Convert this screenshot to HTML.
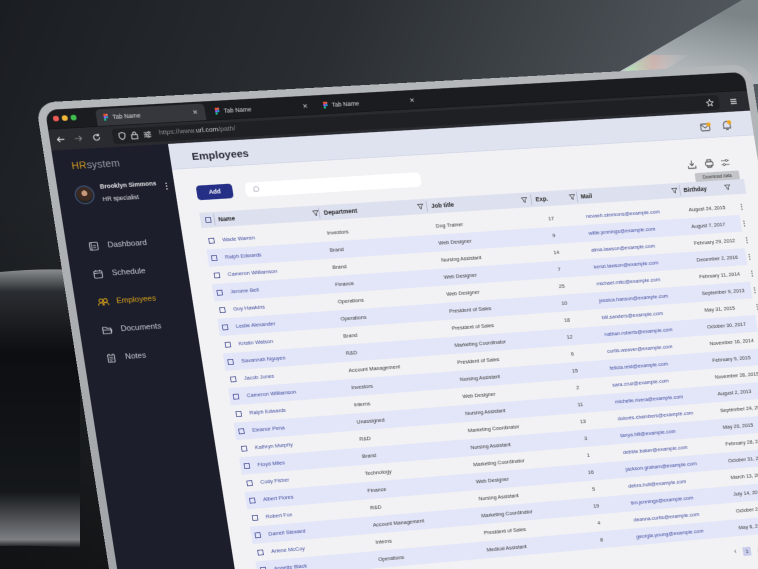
<!DOCTYPE html>
<html><head><meta charset="utf-8">
<style>
*{box-sizing:border-box;margin:0;padding:0}
html,body{width:758px;height:569px;overflow:hidden}
body{font-family:"Liberation Sans",sans-serif}
#clip{position:absolute;left:0;top:0;width:758px;height:569px;overflow:hidden;background:linear-gradient(112deg,#1a1d21 0%,#2a2e32 35%,#4a5055 68%,#656c71 100%)}
#bgdark{position:absolute;inset:0;background:linear-gradient(to bottom,rgba(0,0,0,0) 35%,rgba(0,0,0,.55) 100%)}
#wrap{position:absolute;left:0;top:0;width:1000px;height:760px;transform-origin:0 0;
transform:matrix3d(0.737352,-0.034289,0,0.000051548,0.110060,0.700293,0,0.000000487,0,0,1,0,45,110,0,1)}
#bezel{position:absolute;left:-11px;top:-11px;width:1022px;height:800px;border-radius:26px;background:linear-gradient(180deg,#b4b7ba,#9da0a4);}
#scr{position:absolute;left:0;top:0;width:1000px;height:780px;border-radius:16px 16px 0 0;overflow:hidden;background:#f2f2f3}
.abs{position:absolute}
#tabs{left:0;top:0;width:1000px;height:27px;background:#1b1c20}
#url{left:0;top:27px;width:1000px;height:31px;background:#2a2b30;border-top:1px solid #141418}
.tab{position:absolute;top:3px;height:24px;width:150px;border-radius:6px 6px 0 0;color:#dcdde0;font-size:8.5px;line-height:24px;padding-left:22px}
.tab .x{position:absolute;right:10px;top:0;font-size:9px;color:#ccc}
.fig{position:absolute;left:10px;top:7px;width:6px;height:10px}
#side{left:0;top:58px;width:160px;height:730px;background:#1c1e2b}
#main{left:160px;top:58px;width:840px;height:730px;background:#f2f2f4}
#hdr{left:0;top:0;width:840px;height:37px;background:#dfe2ef;border-bottom:1px solid #cfd3e6}
.nav{position:absolute;left:30px;font-size:11px;color:#c9ccd4;height:16px;line-height:16px}
.nav svg{position:absolute;left:0;top:1px}
.nav span{position:absolute;left:26px;white-space:nowrap}
.row{position:absolute;left:190px;width:770px;height:25px;font-size:7.5px;line-height:25px;color:#333}
.row.h{background:#e3e6f8}
.row span{position:absolute;white-space:nowrap}
.cb{position:absolute;left:5px;top:9px;width:8px;height:8px;border:1.3px solid #3b4590}
.nm{left:24px;color:#3e4a9e}
.dp{left:171px}.jb{left:326px}.ex{left:478px;width:30px;text-align:center}.ml{left:544px;color:#3e4a9e}.bd{left:696px}
.dots{left:774px;top:8px;width:2px;height:10px;background:radial-gradient(circle,#777 0.8px,transparent 1.1px) 0 0/2px 3.5px}
#th{left:188px;top:159px;width:787px;height:22px;background:#dde0ef;font-size:8.5px;font-weight:bold;color:#222;line-height:22px}
#th span{position:absolute;white-space:nowrap}
.sep{position:absolute;top:3px;width:1px;height:16px;background:#b3b8cf}
.fl{position:absolute;top:7px}
#rows{position:absolute;left:0;top:4px;width:1000px;height:760px}
</style></head><body>
<div id="clip">
<div id="bgdark"></div>
<svg class="abs" style="left:0;top:0" width="758" height="569">
<defs>
<linearGradient id="sw" x1="0" y1="1" x2="0.35" y2="0">
<stop offset="0" stop-color="#f4f8fa"/><stop offset="0.25" stop-color="#b6bcc0"/><stop offset="1" stop-color="#7d8488"/></linearGradient>
<linearGradient id="rb" x1="0" y1="0" x2="1" y2="0">
<stop offset="0" stop-color="#9fb8ff" stop-opacity=".8"/><stop offset=".35" stop-color="#b9f0b0" stop-opacity=".8"/><stop offset=".6" stop-color="#f3b0a0" stop-opacity=".6"/><stop offset="1" stop-color="#fff" stop-opacity="0"/></linearGradient>
<linearGradient id="lo" x1="0" y1="0" x2="0" y2="1">
<stop offset="0" stop-color="#8a8d90"/><stop offset=".08" stop-color="#2a2d31"/><stop offset=".3" stop-color="#0c0e11"/><stop offset=".8" stop-color="#15181b"/><stop offset=".97" stop-color="#7c7f83"/><stop offset="1" stop-color="#101214"/></linearGradient>
</defs>
<polygon points="598,84 742,0 758,0 758,84" fill="url(#sw)"/>
<polygon points="600,84 650,55 690,55 640,84" fill="url(#rb)" opacity=".7"/>
<path d="M0,272 Q40,268 80,270 L80,548 Q40,545 0,546 Z" fill="url(#lo)"/>
</svg>
<div id="wrap">
<div id="bezel"></div>
<div id="scr">
 <div id="tabs" class="abs">
  <div class="abs" style="left:9px;top:9px;width:8px;height:8px;border-radius:50%;background:#ee5b55"></div>
  <div class="abs" style="left:21px;top:9px;width:8px;height:8px;border-radius:50%;background:#f1b73a"></div>
  <div class="abs" style="left:33px;top:9px;width:8px;height:8px;border-radius:50%;background:#40c04f"></div>
  <div class="tab" style="left:68px;background:#36373c"><svg class="fig" viewBox="0 0 6 10"><rect x="0" y="0" width="3" height="3.3" fill="#f24e1e"/><rect x="3" y="0" width="3" height="3.3" rx="1.5" fill="#ff7262"/><rect x="0" y="3.3" width="3" height="3.3" fill="#a259ff"/><circle cx="4.5" cy="5" r="1.5" fill="#1abcfe"/><rect x="0" y="6.6" width="3" height="3.3" rx="1.5" fill="#0acf83"/></svg>Tab Name<span class="x">✕</span></div>
  <div class="tab" style="left:222px"><svg class="fig" viewBox="0 0 6 10"><rect x="0" y="0" width="3" height="3.3" fill="#f24e1e"/><rect x="3" y="0" width="3" height="3.3" rx="1.5" fill="#ff7262"/><rect x="0" y="3.3" width="3" height="3.3" fill="#a259ff"/><circle cx="4.5" cy="5" r="1.5" fill="#1abcfe"/><rect x="0" y="6.6" width="3" height="3.3" rx="1.5" fill="#0acf83"/></svg>Tab Name<span class="x">✕</span></div>
  <div class="tab" style="left:374px"><svg class="fig" viewBox="0 0 6 10"><rect x="0" y="0" width="3" height="3.3" fill="#f24e1e"/><rect x="3" y="0" width="3" height="3.3" rx="1.5" fill="#ff7262"/><rect x="0" y="3.3" width="3" height="3.3" fill="#a259ff"/><circle cx="4.5" cy="5" r="1.5" fill="#1abcfe"/><rect x="0" y="6.6" width="3" height="3.3" rx="1.5" fill="#0acf83"/></svg>Tab Name<span class="x">✕</span></div>
 </div>
 <div id="url" class="abs">
  <svg class="abs" style="left:9px;top:10px" width="12" height="10"><path d="M11 5H2M5 1.5L1.5 5L5 8.5" fill="none" stroke="#ddd" stroke-width="1.3"/></svg>
  <svg class="abs" style="left:33px;top:10px" width="12" height="10"><path d="M1 5H10M7 1.5L10.5 5L7 8.5" fill="none" stroke="#888" stroke-width="1.2"/></svg>
  <svg class="abs" style="left:58px;top:9px" width="12" height="12"><path d="M10 6A4 4 0 1 1 8.5 2.8M9 0.8V3.5H6.3" fill="none" stroke="#ddd" stroke-width="1.3"/></svg>
  <div class="abs" style="left:86px;top:4px;width:870px;height:22px;border-radius:5px;background:#1f2024"></div>
  <svg class="abs" style="left:94px;top:9px" width="10" height="12"><path d="M5 1L9 2.5V6C9 8.5 7 10 5 11C3 10 1 8.5 1 6V2.5Z" fill="none" stroke="#ddd" stroke-width="1.2"/></svg>
  <svg class="abs" style="left:111px;top:9px" width="10" height="12"><rect x="1" y="5" width="8" height="6" fill="none" stroke="#ddd" stroke-width="1.2"/><path d="M3 5V3.2A2 2 0 0 1 7 3.2V5" fill="none" stroke="#ddd" stroke-width="1.2"/></svg>
  <svg class="abs" style="left:128px;top:9px" width="12" height="12"><path d="M1 3H11M1 6H11M1 9H11" stroke="#ddd" stroke-width="1.1"/><circle cx="8" cy="3" r="1.3" fill="#1f2024" stroke="#ddd"/><circle cx="4" cy="6" r="1.3" fill="#1f2024" stroke="#ddd"/><circle cx="7" cy="9" r="1.3" fill="#1f2024" stroke="#ddd"/></svg>
  <div class="abs" style="left:150px;top:8px;font-size:9.5px;color:#8b8d93;white-space:nowrap">https://www.<span style="color:#d6d7da">url.com</span>/path/</div>
  <svg class="abs" style="left:936px;top:9px" width="12" height="12" viewBox="0 0 12 12"><path d="M6 1 L7.5 4.3 L11 4.6 L8.3 7 L9.1 10.5 L6 8.7 L2.9 10.5 L3.7 7 L1 4.6 L4.5 4.3Z" fill="none" stroke="#ddd" stroke-width="1.1"/></svg>
  <svg class="abs" style="left:972px;top:10px" width="11" height="10"><path d="M1 2H10M1 5H10M1 8H10" stroke="#ddd" stroke-width="1.3"/></svg>
 </div>
 <div id="side" class="abs">
  <div class="abs" style="left:24px;top:15px;font-size:14px;color:#9a9ca6;letter-spacing:.2px"><span style="color:#c9951f">HR</span>system</div>
  <div class="abs" style="left:22px;top:52px;width:27px;height:27px;border-radius:50%;background:radial-gradient(circle at 50% 40%,#c79a7c 0 22%,#3a2a22 23% 60%,#222 61%);border:2px solid #3a4a6a"></div>
  <div class="abs" style="left:58px;top:50px;font-size:8.5px;color:#e6e7ea;font-weight:bold;white-space:nowrap">Brooklyn Simmons</div>
  <div class="abs" style="left:59px;top:68px;font-size:8.5px;color:#e6e7ea;white-space:nowrap">HR specialist</div>
  <div class="abs" style="left:148px;top:54px;width:2px;height:12px;background:radial-gradient(circle,#bbb 0.8px,transparent 1.1px) 0 0/2px 4px"></div>
  <div class="nav" style="top:131px"><svg width="14" height="14"><rect x="1.5" y="1.5" width="11" height="11" rx="1.5" fill="none" stroke="#c9ccd4" stroke-width="1.2"/><path d="M4 1.5V12.5M6 6H10M6 9H10" stroke="#c9ccd4" stroke-width="1.1"/></svg><span>Dashboard</span></div>
  <div class="nav" style="top:171px"><svg width="14" height="14"><rect x="1.5" y="2.5" width="11" height="10" rx="1.5" fill="none" stroke="#c9ccd4" stroke-width="1.2"/><path d="M1.5 5.5H12.5M4.5 1V3.5M9.5 1V3.5" stroke="#c9ccd4" stroke-width="1.1"/></svg><span>Schedule</span></div>
  <div class="nav" style="top:211px;color:#d9a21b"><svg width="16" height="14"><circle cx="5" cy="5" r="2.6" fill="none" stroke="#d9a21b" stroke-width="1.2"/><circle cx="11" cy="5" r="2.6" fill="none" stroke="#d9a21b" stroke-width="1.2"/><path d="M1 12C1 9 3 8 5 8S9 9 9 12M7 12C7 9 9 8 11 8S15 9 15 12" fill="none" stroke="#d9a21b" stroke-width="1.2"/></svg><span>Employees</span></div>
  <div class="nav" style="top:251px"><svg width="15" height="14"><path d="M1.5 3H6L7.5 4.5H12.5V12H1.5Z M1.5 7H13.5L12.5 12" fill="none" stroke="#c9ccd4" stroke-width="1.2"/></svg><span>Documents</span></div>
  <div class="nav" style="top:291px"><svg width="14" height="14"><rect x="2.5" y="2" width="9" height="11" rx="1" fill="none" stroke="#c9ccd4" stroke-width="1.2"/><path d="M5 1V3H9V1M4.5 6H9.5M4.5 8.5H9.5M4.5 11H8" stroke="#c9ccd4" stroke-width="1.1"/></svg><span>Notes</span></div>
 </div>
 <div id="main" class="abs">
  <div id="hdr" class="abs">
   <div class="abs" style="left:30px;top:12px;font-size:15px;font-weight:bold;color:#2a2d38">Employees</div>
   <svg class="abs" style="left:762px;top:14px" width="16" height="14"><rect x="1" y="2" width="13" height="10" rx="1.5" fill="none" stroke="#555" stroke-width="1.3"/><path d="M1.5 3L7.5 8L13.5 3" fill="none" stroke="#555" stroke-width="1.2"/><circle cx="13" cy="3" r="3" fill="#f0a418"/></svg>
   <svg class="abs" style="left:794px;top:12px" width="16" height="16"><path d="M3 12V7A5 5 0 0 1 13 7V12H2M6 14H10" fill="none" stroke="#555" stroke-width="1.3"/><circle cx="12" cy="3.5" r="3" fill="#f0a418"/></svg>
  </div>
 </div>
 <div id="rows">
 <div class="abs" style="left:189px;top:116px;width:50px;height:21px;border-radius:5px;background:#252f86;color:#fff;font-size:8.5px;font-weight:bold;text-align:center;line-height:21px">Add</div>
 <div class="abs" style="left:257px;top:116px;width:248px;height:21px;border-radius:6px;background:#fff"><svg class="abs" style="left:10px;top:5px" width="11" height="11"><circle cx="5" cy="5" r="3.6" fill="none" stroke="#aab" stroke-width="1"/><path d="M2.4 7.6L1 9" stroke="#aab"/></svg></div>
 <svg class="abs" style="left:894px;top:122px" width="14" height="14"><path d="M7 1V8M4 5.5L7 8.5L10 5.5M1.5 9V12.5H12.5V9" fill="none" stroke="#555" stroke-width="1.3"/></svg>
 <svg class="abs" style="left:920px;top:122px" width="14" height="14"><rect x="1.5" y="4.5" width="11" height="6" rx="2" fill="none" stroke="#555" stroke-width="1.3"/><path d="M4 4.5V1.5H10V4.5M4 9V12.5H10V9" fill="none" stroke="#555" stroke-width="1.3"/></svg>
 <svg class="abs" style="left:944px;top:122px" width="14" height="14"><path d="M1 4H13M1 10H13" stroke="#555" stroke-width="1.2"/><circle cx="9" cy="4" r="1.6" fill="#f2f2f4" stroke="#555"/><circle cx="5" cy="10" r="1.6" fill="#f2f2f4" stroke="#555"/></svg>
 <div class="abs" style="left:903px;top:142px;width:66px;height:15px;background:#c4c5c8;color:#333;font-size:6.5px;line-height:15px;text-align:center;border-radius:2px">Download data</div>
 <div id="th" class="abs" style="top:155px">
  <div class="cb" style="left:7px;top:7px"></div>
  <div class="sep" style="left:19px"></div><span style="left:25px">Name</span>
  <svg class="fl" style="left:157px" width="9" height="8"><path d="M0.5 0.5H8.5L5.5 4V7.5L3.5 6.5V4Z" fill="none" stroke="#444"/></svg>
  <div class="sep" style="left:166px"></div><span style="left:173px">Department</span>
  <svg class="fl" style="left:306px" width="9" height="8"><path d="M0.5 0.5H8.5L5.5 4V7.5L3.5 6.5V4Z" fill="none" stroke="#444"/></svg>
  <div class="sep" style="left:319px"></div><span style="left:326px">Job title</span>
  <svg class="fl" style="left:456px" width="9" height="8"><path d="M0.5 0.5H8.5L5.5 4V7.5L3.5 6.5V4Z" fill="none" stroke="#444"/></svg>
  <div class="sep" style="left:470px"></div><span style="left:477px">Exp.</span>
  <svg class="fl" style="left:526px" width="9" height="8"><path d="M0.5 0.5H8.5L5.5 4V7.5L3.5 6.5V4Z" fill="none" stroke="#444"/></svg>
  <div class="sep" style="left:537px"></div><span style="left:543px">Mail</span>
  <svg class="fl" style="left:677px" width="9" height="8"><path d="M0.5 0.5H8.5L5.5 4V7.5L3.5 6.5V4Z" fill="none" stroke="#444"/></svg>
  <div class="sep" style="left:689px"></div><span style="left:695px">Birthday</span>
  <svg class="fl" style="left:756px" width="9" height="8"><path d="M0.5 0.5H8.5L5.5 4V7.5L3.5 6.5V4Z" fill="none" stroke="#444"/></svg>
 </div>
 <div class="row" style="top:183px"><div class="cb"></div><span class="nm">Wade Warren</span><span class="dp">Investors</span><span class="jb">Dog Trainer</span><span class="ex">17</span><span class="ml">nevaeh.simmons@example.com</span><span class="bd">August 24, 2015</span><span class="dots"></span></div>
 <div class="row h" style="top:208px"><div class="cb"></div><span class="nm">Ralph Edwards</span><span class="dp">Brand</span><span class="jb">Web Designer</span><span class="ex">9</span><span class="ml">willie.jennings@example.com</span><span class="bd">August 7, 2017</span><span class="dots"></span></div>
 <div class="row" style="top:233px"><div class="cb"></div><span class="nm">Cameron Williamson</span><span class="dp">Brand</span><span class="jb">Nursing Assistant</span><span class="ex">14</span><span class="ml">alma.lawson@example.com</span><span class="bd">February 29, 2012</span><span class="dots"></span></div>
 <div class="row h" style="top:258px"><div class="cb"></div><span class="nm">Jerome Bell</span><span class="dp">Finance</span><span class="jb">Web Designer</span><span class="ex">7</span><span class="ml">kenzi.lawson@example.com</span><span class="bd">December 2, 2016</span><span class="dots"></span></div>
 <div class="row" style="top:283px"><div class="cb"></div><span class="nm">Guy Hawkins</span><span class="dp">Operations</span><span class="jb">Web Designer</span><span class="ex">25</span><span class="ml">michael.mitc@example.com</span><span class="bd">February 11, 2014</span><span class="dots"></span></div>
 <div class="row h" style="top:308px"><div class="cb"></div><span class="nm">Leslie Alexander</span><span class="dp">Operations</span><span class="jb">President of Sales</span><span class="ex">10</span><span class="ml">jessica.hanson@example.com</span><span class="bd">September 9, 2013</span><span class="dots"></span></div>
 <div class="row" style="top:333px"><div class="cb"></div><span class="nm">Kristin Watson</span><span class="dp">Brand</span><span class="jb">President of Sales</span><span class="ex">18</span><span class="ml">bill.sanders@example.com</span><span class="bd">May 31, 2015</span><span class="dots"></span></div>
 <div class="row h" style="top:358px"><div class="cb"></div><span class="nm">Savannah Nguyen</span><span class="dp">R&amp;D</span><span class="jb">Marketing Coordinator</span><span class="ex">12</span><span class="ml">nathan.roberts@example.com</span><span class="bd">October 30, 2017</span><span class="dots"></span></div>
 <div class="row" style="top:383px"><div class="cb"></div><span class="nm">Jacob Jones</span><span class="dp">Account Management</span><span class="jb">President of Sales</span><span class="ex">6</span><span class="ml">curtis.weaver@example.com</span><span class="bd">November 16, 2014</span><span class="dots"></span></div>
 <div class="row h" style="top:408px"><div class="cb"></div><span class="nm">Cameron Williamson</span><span class="dp">Investors</span><span class="jb">Nursing Assistant</span><span class="ex">15</span><span class="ml">felicia.reid@example.com</span><span class="bd">February 9, 2015</span><span class="dots"></span></div>
 <div class="row" style="top:433px"><div class="cb"></div><span class="nm">Ralph Edwards</span><span class="dp">Interns</span><span class="jb">Web Designer</span><span class="ex">2</span><span class="ml">sara.cruz@example.com</span><span class="bd">November 28, 2015</span><span class="dots"></span></div>
 <div class="row h" style="top:458px"><div class="cb"></div><span class="nm">Eleanor Pena</span><span class="dp">Unassigned</span><span class="jb">Nursing Assistant</span><span class="ex">11</span><span class="ml">michelle.rivera@example.com</span><span class="bd">August 2, 2013</span><span class="dots"></span></div>
 <div class="row" style="top:483px"><div class="cb"></div><span class="nm">Kathryn Murphy</span><span class="dp">R&amp;D</span><span class="jb">Marketing Coordinator</span><span class="ex">13</span><span class="ml">dolores.chambers@example.com</span><span class="bd">September 24, 2017</span><span class="dots"></span></div>
 <div class="row h" style="top:508px"><div class="cb"></div><span class="nm">Floyd Miles</span><span class="dp">Brand</span><span class="jb">Nursing Assistant</span><span class="ex">3</span><span class="ml">tanya.hill@example.com</span><span class="bd">May 20, 2015</span><span class="dots"></span></div>
 <div class="row" style="top:533px"><div class="cb"></div><span class="nm">Cody Fisher</span><span class="dp">Technology</span><span class="jb">Marketing Coordinator</span><span class="ex">1</span><span class="ml">debbie.baker@example.com</span><span class="bd">February 28, 2018</span><span class="dots"></span></div>
 <div class="row h" style="top:558px"><div class="cb"></div><span class="nm">Albert Flores</span><span class="dp">Finance</span><span class="jb">Web Designer</span><span class="ex">16</span><span class="ml">jackson.graham@example.com</span><span class="bd">October 31, 2017</span><span class="dots"></span></div>
 <div class="row" style="top:583px"><div class="cb"></div><span class="nm">Robert Fox</span><span class="dp">R&amp;D</span><span class="jb">Nursing Assistant</span><span class="ex">5</span><span class="ml">debra.holt@example.com</span><span class="bd">March 13, 2014</span><span class="dots"></span></div>
 <div class="row h" style="top:608px"><div class="cb"></div><span class="nm">Darrell Steward</span><span class="dp">Account Management</span><span class="jb">Marketing Coordinator</span><span class="ex">19</span><span class="ml">tim.jennings@example.com</span><span class="bd">July 14, 2015</span><span class="dots"></span></div>
 <div class="row" style="top:633px"><div class="cb"></div><span class="nm">Arlene McCoy</span><span class="dp">Interns</span><span class="jb">President of Sales</span><span class="ex">4</span><span class="ml">deanna.curtis@example.com</span><span class="bd">October 24, 2017</span><span class="dots"></span></div>
 <div class="row h" style="top:658px"><div class="cb"></div><span class="nm">Annette Black</span><span class="dp">Operations</span><span class="jb">Medical Assistant</span><span class="ex">8</span><span class="ml">georgia.young@example.com</span><span class="bd">May 6, 2016</span><span class="dots"></span></div>
 <div class="abs" style="left:874px;top:700px;font-size:10px;color:#444">‹</div>
 <div class="abs" style="left:887px;top:700px;width:12px;height:13px;background:#c9cdeb;font-size:7.5px;text-align:center;line-height:13px;color:#334">1</div>
 <div class="abs" style="left:905px;top:700px;width:12px;height:13px;font-size:7.5px;text-align:center;line-height:13px;color:#334">2</div>
 </div>
</div>
</div>
</div>
</body></html>
